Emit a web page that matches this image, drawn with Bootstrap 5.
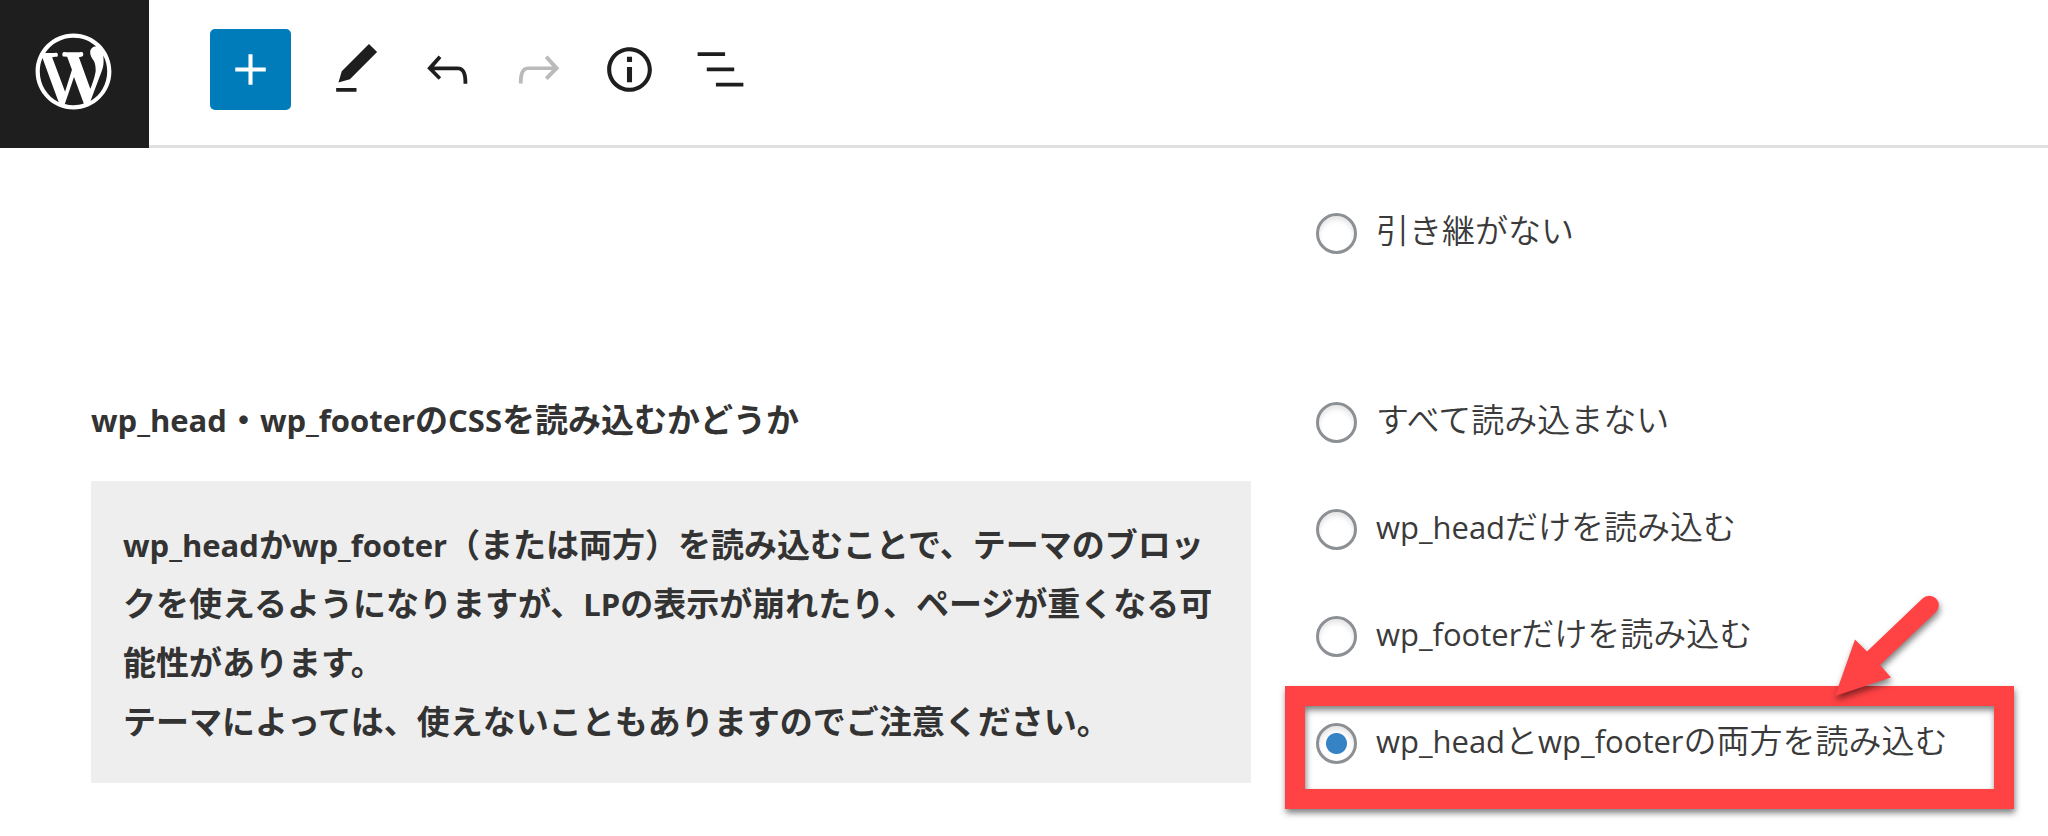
<!DOCTYPE html>
<html lang="ja">
<head>
<meta charset="utf-8">
<meta name="viewport" content="width=device-width, initial-scale=1">
<title>LP設定</title>
<link rel="stylesheet" href="https://cdn.jsdelivr.net/npm/bootstrap@5.3.0/dist/css/bootstrap.min.css">
<style>
  body { font-family: "Noto Sans CJK JP", sans-serif; font-size: 33px; line-height: 59px; color: #333; background: #fff; }
  .latin { font-family: "Open Sans", sans-serif; font-size: 31px; line-height: 1; }

  /* editor toolbar */
  .editor-bar { height: 148px; box-shadow: inset 0 -3px #e0e0e0; }
  .site-logo { width: 149px; padding: 0 3px 6px 0; background: #1e1e1e; color: #fff; }
  .site-logo svg { width: 91px; height: 91px; }
  .tools { padding: 0 0 9px 61px; }
  .tool { width: 91px; height: 81px; padding: 0; border: 0; border-radius: 5px; color: #1e1e1e; line-height: 1; }
  .tool svg { width: 61px; height: 61px; fill: currentColor; }
  .tool:disabled { border: 0; color: #1e1e1e; opacity: .3; }
  .tool-add, .tool-add:hover { width: 81px; margin-right: 20px; background: #007cba; color: #fff; }

  /* settings */
  main { padding-bottom: 53px; }
  .setting { display: grid; grid-template-columns: 35fr 22fr; column-gap: 34px; padding: 0 34px 0 91px; }
  .setting-first { padding-top: 52px; }
  .setting-next { padding-top: 130px; }
  .setting h2 { font-size: 33px; line-height: 59px; margin: 0 0 33px; }
  .note-box { background: #eee; padding: 33px 32px; line-height: 59px; }
  .options { display: grid; row-gap: 48px; align-content: start; }
  .option { padding: 0 31px; gap: 19px; }
  .option label { font-weight: 350; color: #3a3a3a; }
  .option .latin { font-weight: 400; }
  .option .form-check-input { width: 41px; height: 41px; margin: 13px 0 0; flex: none; border: 3px solid #8c8f94; background-color: #fff; box-shadow: inset 0 4px 5px rgba(0,0,0,.1); }
  .option .form-check-input:checked { background-image: radial-gradient(circle, #3582c4 10px, transparent 11px); background-size: 100% 100%; }

  /* call-out over the chosen option */
  .callout-frame { position: absolute; inset: -24px 0 -40px; border: 20px solid #ff4244; filter: drop-shadow(1px 4px 3px rgba(0,0,0,.5)); pointer-events: none; }
  .callout-arrow { position: absolute; right: 64px; top: -121px; width: 125px; height: 120px; filter: drop-shadow(1px 4px 3px rgba(0,0,0,.5)); pointer-events: none; }
</style>
</head>
<body>
<header class="editor-bar d-flex">
  <a href="#" class="site-logo d-flex align-items-center justify-content-center" aria-label="WordPress">
    <svg viewBox="-2 -2 24 24" fill="currentColor" aria-hidden="true"><path d="M20 10c0-5.51-4.49-10-10-10C4.48 0 0 4.49 0 10c0 5.52 4.48 10 10 10 5.51 0 10-4.48 10-10zM7.78 15.37L4.37 6.22c.55-.02 1.17-.08 1.17-.08.5-.06.44-1.13-.06-1.11 0 0-1.45.11-2.37.11-.18 0-.37 0-.58-.01C4.12 2.69 6.87 1.11 10 1.11c2.33 0 4.45.87 6.05 2.34-.68-.11-1.65.39-1.65 1.58 0 .74.45 1.36.9 2.1.35.61.55 1.36.55 2.46 0 1.49-1.4 5-1.4 5l-3.03-8.37c.54-.02.82-.17.82-.17.5-.05.44-1.25-.06-1.22 0 0-1.44.12-2.38.12-.87 0-2.33-.12-2.33-.12-.5-.03-.56 1.2-.06 1.22l.92.08 1.26 3.41zM17.41 10c.24-.64.74-1.87.43-4.25.7 1.29 1.05 2.71 1.05 4.25 0 3.29-1.73 6.24-4.4 7.78.97-2.59 1.94-5.2 2.92-7.78zM6.1 18.09C3.12 16.65 1.11 13.53 1.11 10c0-1.3.23-2.48.72-3.59C3.25 10.3 4.67 14.2 6.1 18.09zm4.03-6.63l2.58 6.98c-.86.29-1.76.45-2.71.45-.79 0-1.57-.11-2.29-.33.81-2.38 1.62-4.74 2.42-7.1z"/></svg>
  </a>
  <div class="tools d-flex align-items-center">
    <button type="button" class="btn tool tool-add" aria-label="ブロックを追加"><svg viewBox="0 0 24 24"><path d="M18 11.2h-5.2V6h-1.6v5.2H6v1.6h5.2V18h1.6v-5.2H18z"/></svg></button>
    <button type="button" class="btn tool" aria-label="編集"><svg viewBox="0 0 24 24"><path d="M20.1 5.1L16.9 2 6.2 12.7l-1.3 4.4 4.5-1.3L20.1 5.1zM4 20.8h8v-1.5H4v1.5z"/></svg></button>
    <button type="button" class="btn tool" aria-label="元に戻す"><svg viewBox="0 0 24 24"><path d="M18.3 11.7c-.6-.6-1.4-.9-2.3-.9H6.7l2.9-3.3-1.1-1-4.5 5L8.5 16l1-1-2.7-2.7H16c.5 0 .9.2 1.3.5 1 1 1 3.4 1 4.5v.3h1.5v-.2c0-1.5 0-4.3-1.5-5.7z"/></svg></button>
    <button type="button" class="btn tool" aria-label="やり直す" disabled><svg viewBox="0 0 24 24"><path d="M15.6 6.5l-1.1 1 2.9 3.3H8c-.9 0-1.7.3-2.3.9-1.4 1.5-1.4 4.2-1.4 5.6v.2h1.5v-.3c0-1.1 0-3.5 1-4.5.3-.3.7-.5 1.3-.5h9.2L14.5 15l1.1 1.1 4.6-4.6-4.6-5z"/></svg></button>
    <button type="button" class="btn tool" aria-label="詳細"><svg viewBox="0 0 24 24"><path d="M12 3.2c-4.8 0-8.8 3.9-8.8 8.8 0 4.8 3.9 8.8 8.8 8.8 4.8 0 8.8-3.9 8.8-8.8 0-4.8-4-8.8-8.8-8.8zm0 16c-4 0-7.2-3.3-7.2-7.2C4.8 8 8 4.8 12 4.8s7.2 3.3 7.2 7.2c0 4-3.2 7.2-7.2 7.2zM11 17h2v-6h-2v6zm0-8h2V7h-2v2z"/></svg></button>
    <button type="button" class="btn tool" aria-label="リスト表示"><svg viewBox="0 0 24 24"><path d="M13.8 5.2H3v1.5h10.8V5.2zm-3.6 12v1.5H21v-1.5H10.2zm7.2-6H6.6v1.5h10.8v-1.5z"/></svg></button>
  </div>
</header>

<main>
  <section class="setting setting-first">
    <div></div>
    <div class="options">
      <div class="option d-flex align-items-start">
        <input class="form-check-input" type="radio" name="inherit" id="inherit-no"><label for="inherit-no">引き継がない</label>
      </div>
    </div>
  </section>

  <section class="setting setting-next">
    <div>
      <h2 class="fw-bold"><span class="latin">wp_head</span>・<span class="latin">wp_footer</span>の<span class="latin">CSS</span>を読み込むかどうか</h2>
      <div class="note-box"><strong><span class="latin">wp_head</span>か<span class="latin">wp_footer</span>（または両方）を読み込むことで、テーマのブロックを使えるようになりますが、<span class="latin">LP</span>の表示が崩れたり、ページが重くなる可能性があります。<br>テーマによっては、使えないこともありますのでご注意ください。</strong></div>
    </div>
    <div class="options">
      <div class="option d-flex align-items-start">
        <input class="form-check-input" type="radio" name="load" id="load-none"><label for="load-none">すべて読み込まない</label>
      </div>
      <div class="option d-flex align-items-start">
        <input class="form-check-input" type="radio" name="load" id="load-head"><label for="load-head"><span class="latin">wp_head</span>だけを読み込む</label>
      </div>
      <div class="option d-flex align-items-start">
        <input class="form-check-input" type="radio" name="load" id="load-footer"><label for="load-footer"><span class="latin">wp_footer</span>だけを読み込む</label>
      </div>
      <div class="option d-flex align-items-start position-relative">
        <input class="form-check-input" type="radio" name="load" id="load-both" checked><label for="load-both"><span class="latin">wp_head</span>と<span class="latin">wp_footer</span>の両方を読み込む</label>
        <div class="callout-frame"></div>
        <svg class="callout-arrow" viewBox="0 0 125 120" aria-hidden="true"><path d="M10 107L30 50.500L42 62.500L97.500 9.500A9.300 9.300 0 0 1 111 23L55 76L66 88.500Z" fill="#ff4244"/></svg>
      </div>
    </div>
  </section>
</main>
<script src="https://cdn.jsdelivr.net/npm/bootstrap@5.3.0/dist/js/bootstrap.bundle.min.js"></script>
</body>
</html>
